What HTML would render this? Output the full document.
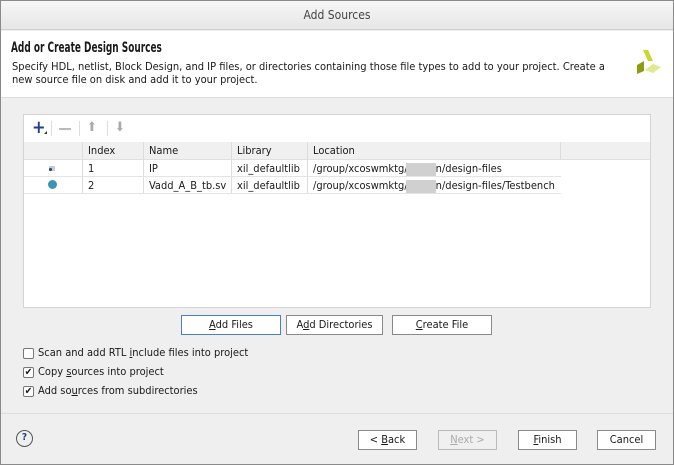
<!DOCTYPE html><html><head><style>
*{margin:0;padding:0;box-sizing:border-box}
body{width:674px;height:465px;font-family:"DejaVu Sans Condensed","DejaVu Sans","Liberation Sans",sans-serif;font-stretch:condensed;font-size:11px;color:#1a1a1a;background:#efefef;position:relative;overflow:hidden}
.abs{position:absolute}
.win{left:0;top:0;width:674px;height:465px;border:1px solid #8a8a8a;}
.title{left:1px;top:1px;width:672px;height:29px;background:linear-gradient(#f7f7f7,#e6e6e6);text-align:center;line-height:29px;color:#444;font-size:12px;border-bottom:1px solid #cfcfcf}
.hdr{left:1px;top:31px;width:672px;height:67px;background:#fff;border-bottom:1px solid #dcdcdc}
.panel{left:23px;top:114px;width:628px;height:194px;background:#fff;border:1px solid #d4d4d4}
.tb{left:0;top:0;width:626px;height:27px}
.th{top:27px;left:0;width:626px;height:18px;background:#f0f0f0;border-bottom:1px solid #e0e0e0}
.row{left:0;width:537px;height:17px;border-bottom:1px solid #e4e4e4}
.c{position:absolute;top:0;height:100%;border-left:1px solid #dcdcdc;padding-left:5px;line-height:17px;white-space:nowrap}
.btn{height:20px;border:1px solid #8a8a8a;background:#fff;text-align:center;line-height:18px;font-size:11px}
.cb{width:11px;height:11px;border:1px solid #777;background:#fff;border-radius:2px}
u{text-decoration:underline}
</style></head><body>
<div class="abs win"></div>
<div class="abs title">Add Sources</div>
<div class="abs hdr">
<div class="abs" style="left:10px;top:9px;font-weight:bold;font-size:14px;transform:scaleX(0.71);transform-origin:0 0;white-space:nowrap">Add or Create Design Sources</div>
<div class="abs" style="left:11px;top:29px;width:600px;line-height:13px;font-size:11px">Specify HDL, netlist, Block Design, and IP files, or directories containing those file types to add to your project. Create a new source file on disk and add it to your project.</div>
<svg class="abs" style="left:631px;top:14px" width="34" height="32"><polygon points="11,5 16,5 21,16 16,16" fill="#cbd72c"/><polygon points="5,20 12,16 12,26 5,29" fill="#8d9c12"/><polygon points="13,25 21,19 29,22 21,28" fill="#dfe98e"/></svg>
</div>
<div class="abs panel">
<div class="abs tb">
<div class="abs" style="left:8px;top:2px;font-size:18px;font-weight:bold;color:#1f3f8a">+</div>
<div class="abs" style="left:20px;top:16px;width:0;height:0;border-left:3px solid transparent;border-bottom:3px solid #333"></div>
<div class="abs" style="left:27px;top:6px;width:1px;height:15px;background:#ddd"></div>
<div class="abs" style="left:35px;top:13px;width:12px;height:2px;background:#bbb"></div>
<div class="abs" style="left:55px;top:6px;width:1px;height:15px;background:#ddd"></div>
<div class="abs" style="left:63px;top:5px;color:#aaa;font-size:13px">⬆</div>
<div class="abs" style="left:83px;top:6px;width:1px;height:15px;background:#ddd"></div>
<div class="abs" style="left:91px;top:5px;color:#aaa;font-size:13px">⬇</div>
</div>
<div class="abs th"><div class="c" style="left:58px;border-left:1px solid #ddd">Index</div><div class="c" style="left:119px">Name</div><div class="c" style="left:207px">Library</div><div class="c" style="left:283px">Location</div><div class="c" style="left:536px"></div></div>
<div class="abs row" style="top:45px"><div class="abs" style="left:25px;top:6px;width:6px;height:5px;background:#ccc"></div><div class="abs" style="left:25px;top:8px;width:3px;height:3px;background:#1f3f8a;border-radius:50%"></div><div class="c" style="left:58px">1</div><div class="c" style="left:119px">IP</div><div class="c" style="left:207px">xil_defaultlib</div><div class="c" style="left:283px">/group/xcoswmktg/<span style="display:inline-block;width:30px;height:13px;background:#d0d0d0;vertical-align:middle;margin-left:-2px"></span>n/design-files</div></div>
<div class="abs row" style="top:62px"><div class="abs" style="left:24px;top:3px;width:9px;height:9px;background:#3a95b5;border-radius:50%"></div><div class="c" style="left:58px">2</div><div class="c" style="left:119px">Vadd_A_B_tb.sv</div><div class="c" style="left:207px">xil_defaultlib</div><div class="c" style="left:283px">/group/xcoswmktg/<span style="display:inline-block;width:30px;height:13px;background:#d0d0d0;vertical-align:middle;margin-left:-2px"></span>n/design-files/Testbench</div></div>
</div>
<div class="abs btn" style="left:181px;top:315px;width:100px;border-color:#4a7fc8"><u>A</u>dd Files</div>
<div class="abs btn" style="left:286px;top:315px;width:97px">A<u>d</u>d Directories</div>
<div class="abs btn" style="left:392px;top:315px;width:100px"><u>C</u>reate File</div>
<div class="abs cb" style="left:23px;top:348px"></div><div class="abs" style="left:38px;top:346px">Scan and add RTL <u>i</u>nclude files into project</div>
<div class="abs cb" style="left:23px;top:367px;font-size:10px;line-height:9px;text-align:center">✔</div><div class="abs" style="left:38px;top:365px">Copy <u>s</u>ources into project</div>
<div class="abs cb" style="left:23px;top:386px;font-size:10px;line-height:9px;text-align:center">✔</div><div class="abs" style="left:38px;top:384px">Add so<u>u</u>rces from subdirectories</div>
<div class="abs" style="left:1px;top:413px;width:672px;height:1px;background:#dcdcdc"></div>
<div class="abs" style="left:16px;top:430px;width:17px;height:17px;border:1.5px solid #555;border-radius:50%;text-align:center;line-height:14px;font-weight:bold;color:#1f3f8a;font-size:10px">?</div>
<div class="abs btn" style="left:358px;top:430px;width:59px">&lt; <u>B</u>ack</div>
<div class="abs btn" style="left:438px;top:430px;width:59px;color:#aaa;border-color:#bbb;background:#f0f0f0"><u>N</u>ext &gt;</div>
<div class="abs btn" style="left:518px;top:430px;width:59px"><u>F</u>inish</div>
<div class="abs btn" style="left:597px;top:430px;width:59px">Cancel</div>
</body></html>
